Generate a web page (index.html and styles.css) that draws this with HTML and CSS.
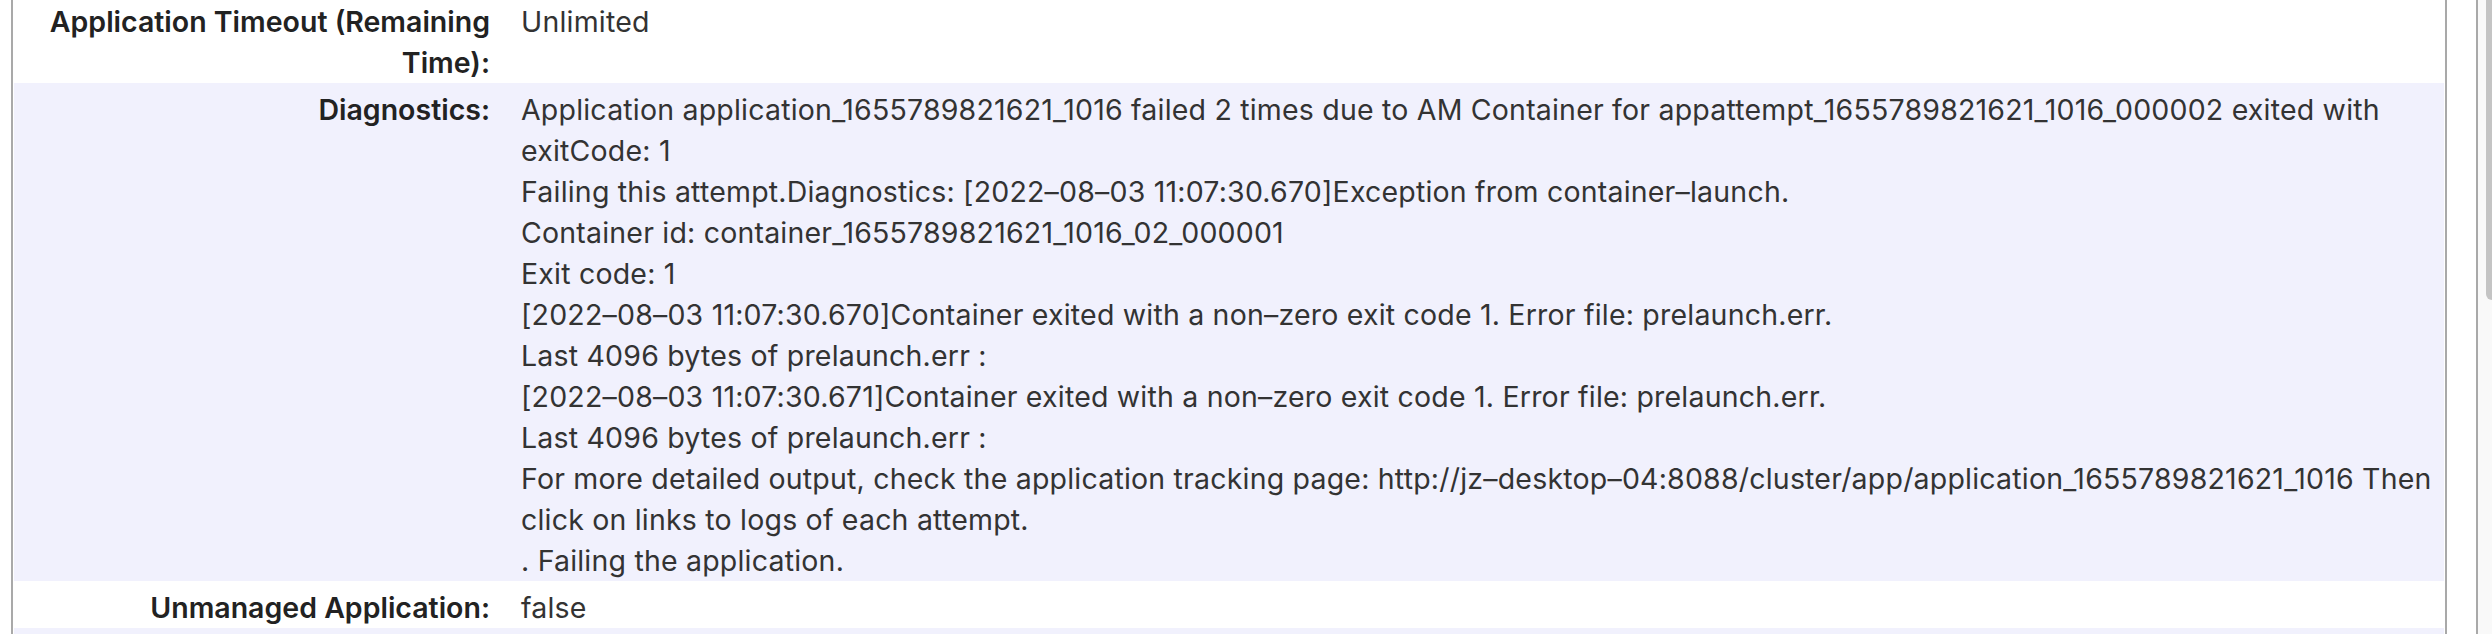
FILE: index.html
```html
<!DOCTYPE html>
<html lang="en">
  <head>
    <meta charset="UTF-8" />
    <meta name="viewport" content="width=device-width, initial-scale=1.0" />
    <title>Application Overview</title>
    <link rel="stylesheet" href="styles.css">
  </head>
  <body>
    <div class="frame">
      <div class="content">
        <table class="info">
          <tr>
            <th>Application Timeout (Remaining Time):</th>
            <td>Unlimited</td>
          </tr>
          <tr class="odd">
            <th>Diagnostics:</th>
            <td>Application application_1655789821621_1016 failed 2 times due to AM Container for appattempt_1655789821621_1016_000002 exited with exitCode: 1<br>
              Failing this attempt.Diagnostics: [2022&#8211;08&#8211;03 11:07:30.670]Exception from container&#8211;launch.<br>
              Container id: container_1655789821621_1016_02_000001<br>
              Exit code: 1<br>
              [2022&#8211;08&#8211;03 11:07:30.670]Container exited with a non&#8211;zero exit code 1. Error file: prelaunch.err.<br>
              Last 4096 bytes of prelaunch.err :<br>
              [2022&#8211;08&#8211;03 11:07:30.671]Container exited with a non&#8211;zero exit code 1. Error file: prelaunch.err.<br>
              Last 4096 bytes of prelaunch.err :<br>
              For more detailed output, check the application tracking page: http://jz&#8211;desktop&#8211;04:8088/cluster/app/application_1655789821621_1016 Then click on links to logs of each attempt.<br>
              . Failing the application.</td>
          </tr>
          <tr>
            <th>Unmanaged Application:</th>
            <td>false</td>
          </tr>
          <tr class="odd empty">
            <th></th>
            <td></td>
          </tr>
        </table>
      </div>
      <div class="scrollbar">
        <div class="thumb"></div>
      </div>
    </div>
  </body>
</html>
```

FILE: styles.css
```css
html, body {
  margin: 0;
  height: 634px;
  overflow: hidden;
  background: #fff;
}
.frame {
  display: flex;
  height: 634px;
}
.content {
  margin-left: 11px;
  width: 2430px;
  padding: 0 1px;
  border-left: 2px solid #a9a9a9;
  border-right: 2px solid #a9a9a9;
  overflow: hidden;
}
.scrollbar {
  margin-left: 29px;
  width: 14px;
  border-left: 2px solid #a9a9a9;
  background: #f9f9f9;
}
.thumb {
  margin-left: 8px;
  height: 300px;
  background: #c4c4c4;
  border-radius: 0 0 0 6px;
}
.info {
  width: 100%;
  margin-top: -5px;
  border-collapse: collapse;
  font-family: Inter, "Liberation Sans", sans-serif;
  font-size: 28.5px;
  line-height: 41px;
  letter-spacing: 0.2px;
}
.info th {
  width: 460px;
  padding: 6px 8px 0 16px;
  text-align: right;
  vertical-align: top;
  font-weight: 600;
  letter-spacing: 0;
  color: #222;
}
.info td {
  padding: 6px 6px 0 23px;
  vertical-align: top;
  color: #333;
}
.info tr.odd th,
.info tr.odd td {
  background: #f1f1fd;
}
.info tr.empty td {
  height: 41px;
}
```
